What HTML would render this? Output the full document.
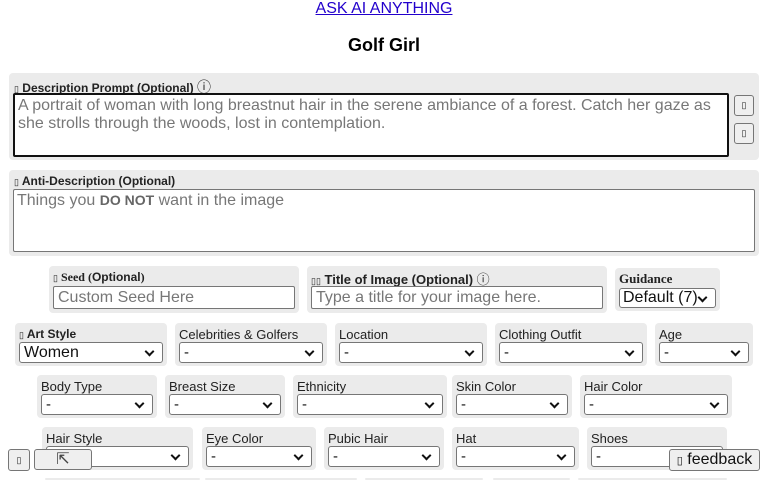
<!DOCTYPE html>
<html><head><meta charset="utf-8"><style>
*{box-sizing:border-box}
html,body{margin:0;width:768px;height:480px;overflow:hidden}
body{background:#fff;font-family:"Liberation Sans",sans-serif;position:relative}
.a{position:absolute}
.box{position:absolute;background:#ebebeb;border-radius:4px}
.lbl{position:absolute;font-size:13px;color:#222;white-space:nowrap}
.b{font-weight:bold;font-size:12px}
.g{font-size:9px;font-weight:normal}
.sel{position:absolute;height:21px;background:#fff;border:1px solid #767676;border-radius:3px;font-size:15px;padding-left:4px;line-height:19px;color:#111}
.sel:after{content:"";position:absolute;right:9px;top:5px;width:5px;height:5px;border-right:2px solid #111;border-bottom:2px solid #111;transform:rotate(45deg)}
.inp{position:absolute;background:#fff;border:1px solid #767676;border-radius:2px;font-size:16px;color:#777;padding-left:4px;white-space:nowrap;overflow:hidden}
.btn{position:absolute;background:#efefef;border:1px solid #767676;border-radius:3px;font-size:9px;text-align:center;color:#222}
</style></head><body>
<div class="a" style="left:0;width:768px;top:0;text-align:center;font-size:16px"><span style="text-decoration:underline;color:#2200cc">ASK AI ANYTHING</span></div>
<div class="a" style="left:0;width:768px;top:35px;text-align:center;font-size:18px;font-weight:bold">Golf Girl</div>

<div class="box" style="left:9px;top:73px;width:750px;height:87px"></div>
<div class="lbl b" style="left:14px;top:77px"><span class="g">▯</span> Description Prompt (Optional) <span style="font-weight:normal;font-size:14px">ⓘ</span></div>
<div class="inp" style="left:13px;top:93px;width:716px;height:64px;border:2px solid #111;white-space:normal;line-height:18px;padding-top:2px;padding-left:3px">A portrait of woman with long breastnut hair in the serene ambiance of a forest. Catch her gaze as she strolls through the woods, lost in contemplation.</div>
<div class="btn" style="left:734px;top:95px;width:20px;height:21px;line-height:19px">▯</div>
<div class="btn" style="left:734px;top:123px;width:20px;height:21px;line-height:19px">▯</div>

<div class="box" style="left:9px;top:170px;width:750px;height:86px"></div>
<div class="lbl b" style="left:14px;top:174px"><span class="g">▯</span> Anti-Description (Optional)</div>
<div class="inp" style="left:13px;top:189px;width:742px;height:63px;padding-top:2px;padding-left:3px">Things you <b style="font-size:14px;color:#666">DO NOT</b> want in the image</div>

<div class="box" style="left:49px;top:266px;width:250px;height:47px"></div>
<div class="lbl" style="left:53px;top:270px;font-family:'Liberation Serif',serif;font-weight:bold;font-size:12px"><span class="g">▯</span> Seed (<span style="font-family:'Liberation Sans',sans-serif">Optional</span>)</div>
<div class="inp" style="left:53px;top:286px;width:242px;height:23px;line-height:21px">Custom Seed Here</div>

<div class="box" style="left:307px;top:266px;width:300px;height:47px"></div>
<div class="lbl" style="left:311px;top:269px;font-weight:bold"><span class="g">▯▯</span> Title of Image (Optional) <span style="font-weight:normal">ⓘ</span></div>
<div class="inp" style="left:311px;top:286px;width:292px;height:23px;line-height:21px">Type a title for your image here.</div>

<div class="box" style="left:615px;top:268px;width:105px;height:43px"></div>
<div class="lbl" style="left:619px;top:271px;font-family:'Liberation Serif',serif;font-weight:bold">Guidance</div>
<div class="sel" style="left:619px;top:288px;width:97px;height:20px;font-size:16px;line-height:18px;padding-left:3px">Default (7)</div>

<div class="box" style="left:15px;top:323px;width:152px;height:43px"></div>
<div class="lbl b" style="left:19px;top:327px"><span class="g">▯</span> Art Style</div>
<div class="sel" style="left:19px;top:342px;width:144px;font-size:16px">Women</div>

<div class="box" style="left:175px;top:323px;width:152px;height:43px"></div><div class="lbl" style="left:179px;top:327px">Celebrities &amp; Golfers</div><div class="sel" style="left:179px;top:342px;width:144px">-</div>
<div class="box" style="left:335px;top:323px;width:152px;height:43px"></div><div class="lbl" style="left:339px;top:327px">Location</div><div class="sel" style="left:339px;top:342px;width:144px">-</div>
<div class="box" style="left:495px;top:323px;width:152px;height:43px"></div><div class="lbl" style="left:499px;top:327px">Clothing Outfit</div><div class="sel" style="left:499px;top:342px;width:144px">-</div>
<div class="box" style="left:655px;top:323px;width:98px;height:43px"></div><div class="lbl" style="left:659px;top:327px">Age</div><div class="sel" style="left:659px;top:342px;width:90px">-</div>

<div class="box" style="left:37px;top:375px;width:120px;height:43px"></div><div class="lbl" style="left:41px;top:379px">Body Type</div><div class="sel" style="left:41px;top:394px;width:112px">-</div>
<div class="box" style="left:165px;top:375px;width:120px;height:43px"></div><div class="lbl" style="left:169px;top:379px">Breast Size</div><div class="sel" style="left:169px;top:394px;width:112px">-</div>
<div class="box" style="left:293px;top:375px;width:154px;height:43px"></div><div class="lbl" style="left:297px;top:379px">Ethnicity</div><div class="sel" style="left:297px;top:394px;width:146px">-</div>
<div class="box" style="left:452px;top:375px;width:120px;height:43px"></div><div class="lbl" style="left:456px;top:379px">Skin Color</div><div class="sel" style="left:456px;top:394px;width:112px">-</div>
<div class="box" style="left:580px;top:375px;width:152px;height:43px"></div><div class="lbl" style="left:584px;top:379px">Hair Color</div><div class="sel" style="left:584px;top:394px;width:144px">-</div>

<div class="box" style="left:42px;top:427px;width:151px;height:43px"></div><div class="lbl" style="left:46px;top:431px">Hair Style</div><div class="sel" style="left:46px;top:446px;width:143px">-</div>
<div class="box" style="left:202px;top:427px;width:114px;height:43px"></div><div class="lbl" style="left:206px;top:431px">Eye Color</div><div class="sel" style="left:206px;top:446px;width:106px">-</div>
<div class="box" style="left:324px;top:427px;width:120px;height:43px"></div><div class="lbl" style="left:328px;top:431px">Pubic Hair</div><div class="sel" style="left:328px;top:446px;width:112px">-</div>
<div class="box" style="left:452px;top:427px;width:127px;height:43px"></div><div class="lbl" style="left:456px;top:431px">Hat</div><div class="sel" style="left:456px;top:446px;width:119px">-</div>
<div class="box" style="left:587px;top:427px;width:140px;height:43px"></div><div class="lbl" style="left:591px;top:431px">Shoes</div><div class="sel" style="left:591px;top:446px;width:132px">-</div>

<div class="box" style="left:45px;top:478px;width:155px;height:2px"></div>
<div class="box" style="left:205px;top:478px;width:152px;height:2px"></div>
<div class="box" style="left:365px;top:478px;width:118px;height:2px"></div>
<div class="box" style="left:493px;top:478px;width:77px;height:2px"></div>
<div class="box" style="left:578px;top:478px;width:149px;height:2px"></div>

<div class="btn" style="left:8px;top:449px;width:22px;height:22px;line-height:20px">▯</div>
<div class="btn" style="left:34px;top:449px;width:58px;height:21px;line-height:19px;font-size:16px;color:#444">⇱</div>
<div class="btn" style="left:669px;top:449px;width:91px;height:22px;line-height:20px;font-size:16px;color:#111"><span style="font-size:11px">▯</span> feedback</div>
</body></html>
